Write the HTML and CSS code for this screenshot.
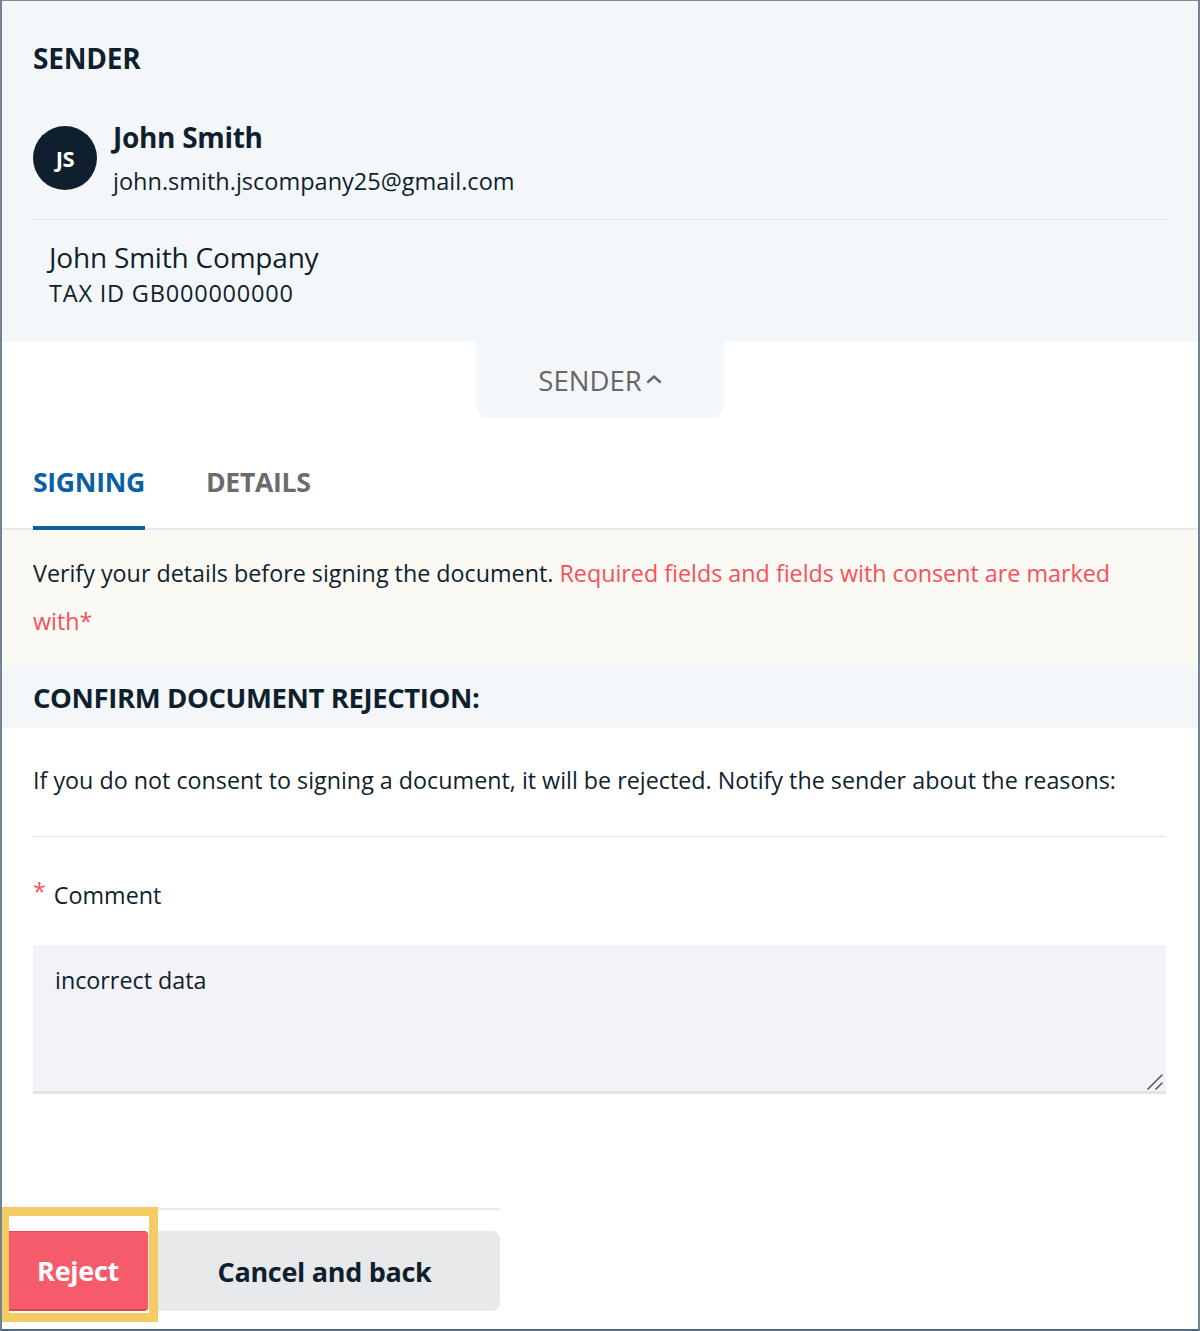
FILE: index.html
```html
<!DOCTYPE html>
<html lang="en">
<head>
<meta charset="utf-8">
<title>Reject document</title>
<link rel="stylesheet" href="styles.css">
</head>
<body>
<div class="frame">
  <section class="sender">
    <h2 class="sender-title">SENDER</h2>
    <div class="person">
      <div class="avatar">JS</div>
      <div class="person-info">
        <div class="person-name">John Smith</div>
        <div class="person-email">john.smith.jscompany25@gmail.com</div>
      </div>
    </div>
    <div class="company">
      <div class="company-name">John Smith Company</div>
      <div class="company-tax">TAX ID GB000000000</div>
    </div>
  </section>

  <div class="toggle-row">
    <button class="toggle" type="button">SENDER<svg class="chev" width="16" height="12" viewBox="0 0 16 12"><path d="M2 9 L8 3.5 L14 9" fill="none" stroke="#666" stroke-width="2.4" stroke-linecap="round" stroke-linejoin="round"/></svg></button>
  </div>

  <nav class="tabs">
    <span class="tab tab-active">SIGNING</span>
    <span class="tab">DETAILS</span>
  </nav>

  <p class="notice">Verify your details before signing the document. <span class="notice-req">Required fields and fields with consent are marked with*</span></p>

  <div class="confirm-head">CONFIRM DOCUMENT REJECTION:</div>

  <div class="form">
    <p class="intro">If you do not consent to signing a document, it will be rejected. Notify the sender about the reasons:</p>
    <label class="label" for="comment"><span class="req">*</span>Comment</label>
    <div class="field">
      <textarea id="comment" class="comment" readonly>incorrect data</textarea>
      <svg class="grip" width="18" height="18" viewBox="0 0 18 18"><path d="M2 16 L16 2 M10 16 L16 10" fill="none" stroke="#555a60" stroke-width="1.6" stroke-linecap="round"/></svg>
    </div>
  </div>

  <div class="actions">
    <div class="buttons">
      <button class="btn btn-reject" type="button">Reject</button>
      <button class="btn btn-cancel" type="button">Cancel and back</button>
    </div>
    <div class="highlight"></div>
  </div>
</div>
</body>
</html>
```

FILE: styles.css
```css
* { box-sizing: border-box; }
html, body { margin: 0; padding: 0; background: #fff; }
body {
  font-family: "Open Sans", "Noto Sans", "Liberation Sans", sans-serif;
  color: #0f1f2e;
}
.frame {
  width: 1200px;
  height: 1331px;
  border-top: 1px solid #7a8b9d;
  border-left: 2px solid #6f8296;
  border-right: 2px solid #6f8296;
  border-bottom: 2px solid #55677a;
  overflow: hidden;
  display: flex;
  flex-direction: column;
}

/* Sender */
.sender {
  background: #f4f7f9;
  padding: 36px 31px 0 31px;
  height: 341px;
  flex: none;
}
.sender-title {
  margin: 0;
  font-size: 28px;
  line-height: 42px;
  font-weight: 700;
  letter-spacing: -0.2px;
}
.person {
  display: flex;
  align-items: flex-start;
  gap: 16px;
  margin-top: 40px;
  padding-bottom: 12px;
  border-bottom: 1px solid #e2e5e8;
}
.avatar {
  width: 64px;
  height: 64px;
  margin-top: 7px;
  border-radius: 50%;
  background: #0f1f2e;
  color: #fff;
  font-weight: 700;
  font-size: 22px;
  display: flex;
  align-items: center;
  justify-content: center;
  letter-spacing: -0.5px;
  flex: none;
}
.person-name {
  font-size: 28px;
  font-weight: 700;
  line-height: 36px;
  letter-spacing: -0.3px;
}
.person-email {
  font-size: 23.5px;
  line-height: 52px;
}
.company {
  padding: 19px 0 0 16px;
}
.company-name {
  font-size: 28px;
  line-height: 36px;
  letter-spacing: -0.2px;
}
.company-tax {
  font-size: 23.5px;
  line-height: 36px;
  letter-spacing: 0.8px;
}

/* Toggle */
.toggle-row {
  display: flex;
  justify-content: center;
  flex: none;
}
.toggle {
  width: 248px;
  height: 76px;
  border: 0;
  border-radius: 0 0 12px 12px;
  background: #f4f7f9;
  color: #666;
  font-family: inherit;
  font-size: 27.5px;
  display: flex;
  align-items: center;
  justify-content: center;
  gap: 4px;
  padding: 0;
}
.chev { margin-top: -2px; }

/* Tabs */
.tabs {
  display: flex;
  gap: 61px;
  padding: 0 31px;
  box-shadow: inset 0 -2px 0 #e8e9eb;
  flex: none;
}
.tab {
  padding: 44px 0 24px;
  line-height: 40px;
  font-size: 26.6px;
  font-weight: 700;
  color: #6b6b6b;
  border-bottom: 4px solid transparent;
  letter-spacing: -0.3px;
}
.tab-active {
  color: #0b5fa6;
  border-bottom-color: #0b5fa6;
}

/* Notice */
.notice {
  margin: 0;
  background: #fbf9f3;
  padding: 19px 31px 21px;
  font-size: 23.3px;
  line-height: 48px;
  flex: none;
}
.notice-req { color: #f4515f; }

.confirm-head {
  background: #f4f7f9;
  height: 62px;
  padding: 0 31px;
  display: flex;
  align-items: center;
  font-size: 27.5px;
  font-weight: 700;
  letter-spacing: -0.4px;
  flex: none;
}

/* Form */
.form {
  padding: 0 32px 0 31px;
  flex: none;
}
.intro {
  margin: 0;
  padding: 34px 0 38px;
  font-size: 23.3px;
  line-height: 36px;
  border-bottom: 1px solid #e3e5e8;
}
.label {
  display: block;
  margin-top: 40px;
  font-size: 23.3px;
  line-height: 36px;
}
.req {
  color: #f4515f;
  margin-right: 8px;
  position: relative;
  top: -4px;
}
.field {
  position: relative;
  margin-top: 32px;
}
.comment {
  display: block;
  width: 100%;
  height: 149px;
  border: 0;
  border-bottom: 3px solid #e3e3e7;
  background: #f2f2f7;
  padding: 20px 22px;
  font-family: inherit;
  font-size: 23.3px;
  line-height: 30px;
  color: #0f1f2e;
  outline: none;
  resize: none;
}
.grip {
  position: absolute;
  right: 2px;
  bottom: 3px;
}

/* Actions */
.actions {
  position: relative;
  margin-top: auto;
  height: 121px;
  flex: none;
}
.buttons {
  width: 498px;
  border-top: 2px solid #e8e9eb;
  padding-top: 21px;
  display: flex;
}
.btn {
  height: 80px;
  border: 0;
  font-family: inherit;
  font-size: 27px;
  font-weight: 700;
  letter-spacing: -0.3px;
  cursor: pointer;
}
.btn-reject {
  width: 140px;
  margin-left: 6px;
  background: #f65b6b;
  color: #fff;
  border-top: 1px solid #e34a52;
  border-bottom: 2px solid #e04848;
  border-radius: 0 4px 4px 0;
  position: relative;
  z-index: 1;
}
.btn-cancel {
  flex: 1;
  background: #e8e9eb;
  color: #0f1f2e;
  border-radius: 0 8px 8px 0;
  padding-left: 7px;
}
.highlight {
  position: absolute;
  left: -2px;
  top: -1px;
  width: 158px;
  height: 115px;
  border: 9px solid #f5cb63;
  z-index: 2;
  pointer-events: none;
}
```
